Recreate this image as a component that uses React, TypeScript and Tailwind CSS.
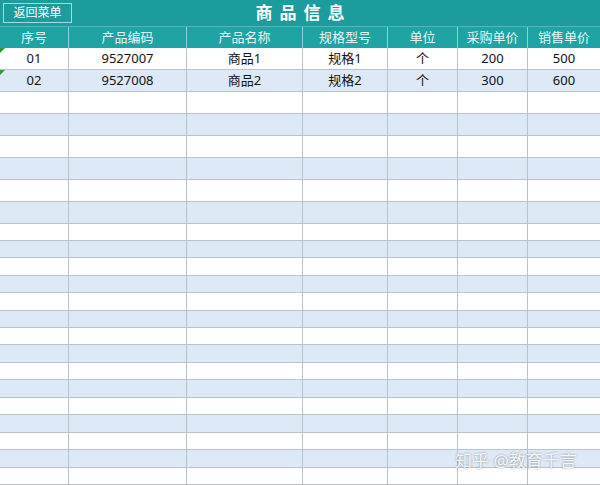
import React from 'react';

const cols = ['序号', '产品编码', '产品名称', '规格型号', '单位', '采购单价', '销售单价'];

const data = [
  ['01', '9527007', '商品1', '规格1', '个', '200', '500'],
  ['02', '9527008', '商品2', '规格2', '个', '300', '600'],
];

// tall rows first, then the compressed ones further down the sheet
const heights = [22, 22, 22, 22, 22, 22, 22, 22, 17, 17, 18, 17, 18, 17, 17, 18, 17, 18, 17, 18, 17, 18, 17];

export default function App() {
  return (
    <div
      className="relative w-[600px] h-[485px] overflow-hidden bg-white"
      style={{ fontFamily: '"Noto Sans", "Noto Sans CJK SC", sans-serif' }}
    >
      {/* title bar */}
      <div className="relative flex h-[26px] items-center justify-center bg-[#1c9c9c]">
        <div className="absolute left-[3px] top-[3px] flex h-[20px] w-[69px] items-center justify-center border border-[#9fdcdc] text-[12px] text-white">
          返回菜单
        </div>
        <div className="pl-[7px] text-[17px] font-bold tracking-[7px] text-white">商品信息</div>
      </div>

      {/* header */}
      <div className="grid h-[22px] grid-cols-[69px_118px_116px_85px_70px_70px_72px] bg-[#1fa3a3] border-t border-[#4fb8b8]">
        {cols.map((c, i) => (
          <div
            key={c}
            className={`flex items-center justify-center text-[13px] text-[#e6f7f7] ${i < 6 ? 'border-r border-[#8cd3d3]' : ''}`}
          >
            {c}
          </div>
        ))}
      </div>

      {/* body */}
      {heights.map((h, r) => (
        <div
          key={r}
          className={`grid grid-cols-[69px_118px_116px_85px_70px_70px_72px] ${r % 2 === 1 ? 'bg-[#dde9f6]' : 'bg-white'}`}
          style={{ height: h }}
        >
          {cols.map((_, i) => (
            <div
              key={i}
              className={`relative flex items-center justify-center border-b border-[#b9c1c9] text-[13px] text-[#111] ${i < 6 ? 'border-r' : ''}`}
            >
              {r < 2 && i === 0 && (
                <span className="absolute left-0 top-0 h-0 w-0 border-t-[5px] border-r-[5px] border-t-[#2e9a3c] border-r-transparent" />
              )}
              {data[r]?.[i]}
            </div>
          ))}
        </div>
      ))}

      {/* watermark */}
      <div
        className="absolute left-[455px] top-[448px] text-[17px] text-white/90"
        style={{ textShadow: '0 0 2px rgba(0,0,0,0.45)' }}
      >
        知乎 @教育千言
      </div>
    </div>
  );
}
